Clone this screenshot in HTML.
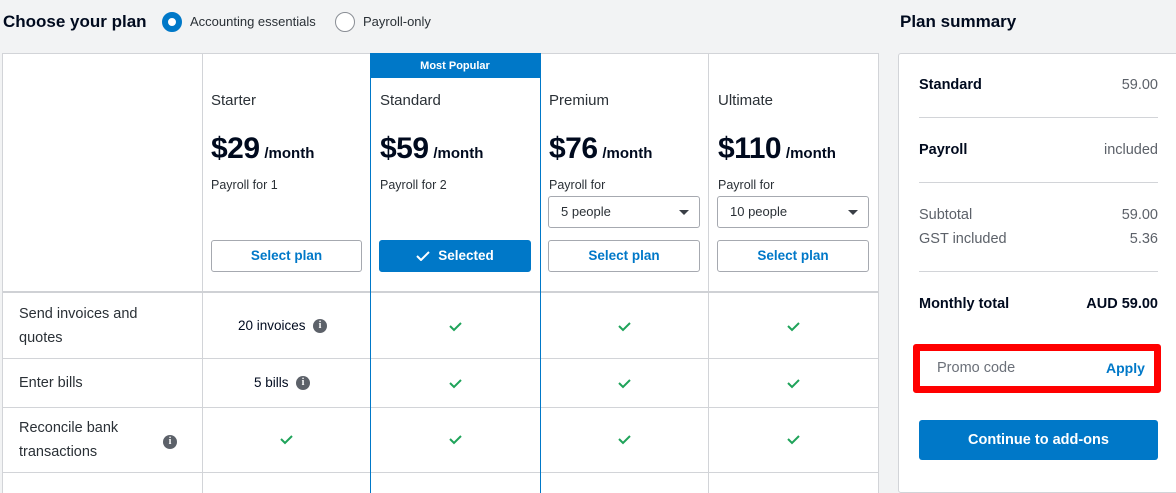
<!DOCTYPE html>
<html><head><meta charset="utf-8"><style>
*{box-sizing:border-box;margin:0;padding:0}
body{width:1176px;height:484px;overflow:hidden;background:#f2f3f4;font-family:"Liberation Sans",Arial,sans-serif;color:#000a1e;position:relative}
.a{position:absolute}
.h1{font-size:17px;font-weight:bold}
.radio{width:20px;height:20px;border-radius:50%}
.cell{position:absolute;background:#fff}
.name{font-size:15px;color:#2a3036}
.price{font-size:30px;font-weight:bold;letter-spacing:-0.5px}
.price small{font-size:15px;letter-spacing:0;margin-left:-3px}
.pf{font-size:12.5px;color:#2a3036}
.btn{position:absolute;height:32px;border:1px solid #a6a9b0;border-radius:3px;background:#fff;color:#0078c8;font-weight:bold;font-size:13.5px;text-align:center;line-height:30px}
.sel{position:absolute;height:32px;border:1px solid #a6a9b0;border-radius:3px;background:#fff;font-size:13px;line-height:30px;padding-left:12px;color:#2a3036}
.sel:after{content:"";position:absolute;right:10px;top:13px;border-left:5px solid transparent;border-right:5px solid transparent;border-top:5px solid #3a3f46}
.hl{position:absolute;height:1px;background:#d2d4d8}
.vl{position:absolute;width:1px;background:#d2d4d8}
.feat{font-size:14.5px;color:#2a3036;line-height:24px}
.info{display:inline-block;width:14px;height:14px;border-radius:50%;background:#5c6169;color:#fff;font-size:10px;font-weight:bold;text-align:center;line-height:14px;font-family:"Liberation Serif",serif;vertical-align:middle}
.sr{position:absolute;left:919px;width:239px;font-size:14.5px}
</style></head><body>
<div class="a h1" style="left:3px;top:12px">Choose your plan</div>
<div class="a radio" style="left:162px;top:12px;border:6px solid #0078c8;background:#fff"></div>
<div class="a" style="left:190px;top:14px;font-size:13px;color:#2a3036">Accounting essentials</div>
<div class="a radio" style="left:335px;top:12px;border:1px solid #8a8e95;background:#fff"></div>
<div class="a" style="left:363px;top:14px;font-size:13px;color:#2a3036">Payroll-only</div>
<div class="a h1" style="left:900px;top:12px">Plan summary</div>

<div class="cell" style="left:2px;top:53px;width:877px;height:440px;border:1px solid #d2d4d8;border-bottom:none"></div>
<div class="vl" style="left:202px;top:53px;height:440px"></div>
<div class="vl" style="left:708px;top:53px;height:440px"></div>
<div class="hl" style="left:3px;top:291px;width:875px;height:2px;background:#cfd1d5"></div>
<div class="hl" style="left:3px;top:358px;width:875px"></div>
<div class="hl" style="left:3px;top:407px;width:875px"></div>
<div class="hl" style="left:3px;top:472px;width:875px"></div>
<div class="a" style="left:370px;top:53px;width:171px;height:440px;border-left:1px solid #0078c8;border-right:1px solid #0078c8"></div>
<div class="a" style="left:370px;top:53px;width:170px;height:25px;background:#0078c8;color:#fff;font-size:11px;font-weight:bold;text-align:center;line-height:26px">Most Popular</div>

<div class="a name" style="left:211px;top:92px">Starter</div>
<div class="a name" style="left:380px;top:92px">Standard</div>
<div class="a name" style="left:549px;top:92px">Premium</div>
<div class="a name" style="left:718px;top:92px">Ultimate</div>
<div class="a price" style="left:211px;top:132px">$29 <small>/month</small></div>
<div class="a price" style="left:380px;top:132px">$59 <small>/month</small></div>
<div class="a price" style="left:549px;top:132px">$76 <small>/month</small></div>
<div class="a price" style="left:718px;top:132px">$110 <small>/month</small></div>
<div class="a pf" style="left:211px;top:178px">Payroll for 1</div>
<div class="a pf" style="left:380px;top:178px">Payroll for 2</div>
<div class="a pf" style="left:549px;top:178px">Payroll for</div>
<div class="a pf" style="left:718px;top:178px">Payroll for</div>
<div class="sel" style="left:548px;top:196px;width:152px">5 people</div>
<div class="sel" style="left:717px;top:196px;width:152px">10 people</div>
<div class="btn" style="left:211px;top:240px;width:151px">Select plan</div>
<div class="btn" style="left:379px;top:240px;width:152px;background:#0078c8;border-color:#0078c8;color:#fff"><svg width="14" height="10" viewBox="0 0 14 10" style="margin-right:8px;vertical-align:-1px"><path d="M1 5l4 4 8-8" stroke="#fff" stroke-width="2" fill="none"/></svg>Selected</div>
<div class="btn" style="left:548px;top:240px;width:152px">Select plan</div>
<div class="btn" style="left:717px;top:240px;width:152px">Select plan</div>

<div class="a feat" style="left:19px;top:302px">Send invoices and<br>quotes</div>
<div class="a feat" style="left:19px;top:371px">Enter bills</div>
<div class="a feat" style="left:19px;top:416px">Reconcile bank<br>transactions</div>
<div class="a" style="left:163px;top:433px"><span class="info">i</span></div>
<div class="a" style="left:238px;top:318px;font-size:13.5px">20 invoices &nbsp;<span class="info">i</span></div>
<div class="a" style="left:254px;top:375px;font-size:13.5px">5 bills &nbsp;<span class="info">i</span></div>

<svg class="a" width="876" height="484" style="left:0;top:0" viewBox="0 0 876 484">
<g stroke="#1fa35a" stroke-width="2" fill="none">
<path d="M450 326l4 4 7-7M619 326l4 4 7-7M788 326l4 4 7-7"/>
<path d="M450 383l4 4 7-7M619 383l4 4 7-7M788 383l4 4 7-7"/>
<path d="M281 439l4 4 7-7M450 439l4 4 7-7M619 439l4 4 7-7M788 439l4 4 7-7"/>
</g></svg>

<div class="cell" style="left:898px;top:53px;width:290px;height:440px;border:1px solid #d2d4d8;border-radius:3px"></div>
<div class="sr" style="top:77px"><b>Standard</b><span style="float:right;color:#5c6169">59.00</span></div>
<div class="hl" style="left:919px;top:117px;width:239px"></div>
<div class="sr" style="top:142px"><b>Payroll</b><span style="float:right;color:#5c6169">included</span></div>
<div class="hl" style="left:919px;top:182px;width:239px"></div>
<div class="sr" style="top:207px;color:#5c6169">Subtotal<span style="float:right">59.00</span></div>
<div class="sr" style="top:231px;color:#5c6169">GST included<span style="float:right">5.36</span></div>
<div class="hl" style="left:919px;top:271px;width:239px"></div>
<div class="sr" style="top:296px;font-weight:bold">Monthly total<span style="float:right">AUD 59.00</span></div>
<div class="a" style="left:913px;top:344px;width:248px;height:49px;border:7px solid #ff0000;border-radius:3px;background:#fff"></div>
<div class="a" style="left:937px;top:360px;font-size:14.5px;color:#6b7079">Promo code</div>
<div class="a" style="left:1106px;top:360px;font-size:14px;font-weight:bold;color:#0078c8">Apply</div>
<div class="a" style="left:919px;top:420px;width:239px;height:40px;background:#0078c8;border-radius:3px;color:#fff;font-weight:bold;font-size:14.5px;text-align:center;line-height:40px">Continue to add-ons</div>
</body></html>
